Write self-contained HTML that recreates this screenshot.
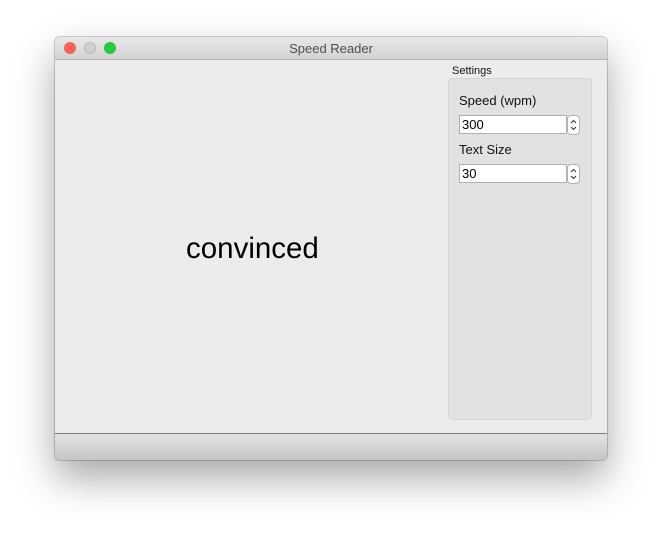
<!DOCTYPE html><html><head><style>
body{margin:0;width:662px;height:534px;background:#fff;font-family:"Liberation Sans",sans-serif;position:relative;overflow:hidden}
.win{position:absolute;left:55px;top:37px;width:552px;height:423px;border-radius:5px;background:#ececec;box-shadow:0 18px 40px rgba(0,0,0,.35),0 0 0 1px rgba(0,0,0,.18);overflow:hidden}
.tb{position:absolute;left:0;top:0;width:100%;height:22px;background:linear-gradient(#e8e8e8,#d3d3d3);border-bottom:1px solid #b4b4b4;text-align:center;font-size:13px;line-height:23px;color:#4d4d4d}
.d{position:absolute;top:5px;width:12px;height:12px;border-radius:50%}
.ft{position:absolute;left:0;top:396px;width:100%;height:27px;border-top:1px solid #7a7a7a;background:linear-gradient(#e3e3e3,#c4c4c4)}
.gb{position:absolute;left:393px;top:41px;width:142px;height:340px;background:#e2e2e2;border:1px solid #d6d6d6;border-radius:4px}
.lbl{position:absolute;font-size:13px;color:#111}
.in{position:absolute;width:104px;height:17px;background:#fff;border:1px solid #b0b0b0;font-size:13px;line-height:18px;padding-left:2px;box-sizing:content-box}
.sp{position:absolute;width:11px;height:18px;background:#fff;border:1px solid #b4b4b4;border-radius:4px}
</style></head><body>
<div class="win">
<div class="tb">Speed Reader
<div class="d" style="left:9px;background:#fe5f57;border:0"></div>
<div class="d" style="left:29px;background:#d0d0d0;box-shadow:inset 0 0 0 1px #bbb"></div>
<div class="d" style="left:49px;background:#28c840"></div></div>
<div style="position:absolute;left:131px;top:195px;font-size:29.5px;color:#000">convinced</div>
<div class="lbl" style="left:397px;top:28px;font-size:11px">Settings</div>
<div class="gb"></div>
<div class="lbl" style="left:404px;top:56px">Speed (wpm)</div>
<div class="in" style="left:404px;top:78px">300</div>
<div class="sp" style="left:512px;top:78px"><svg width="11" height="18"><path d="M3 7l2.5-2.5L8 7M3 11l2.5 2.5L8 11" fill="none" stroke="#333" stroke-width="1"/></svg></div>
<div class="lbl" style="left:404px;top:105px">Text Size</div>
<div class="in" style="left:404px;top:127px">30</div>
<div class="sp" style="left:512px;top:127px"><svg width="11" height="18"><path d="M3 7l2.5-2.5L8 7M3 11l2.5 2.5L8 11" fill="none" stroke="#333" stroke-width="1"/></svg></div>
<div class="ft"></div>
</div>
</body></html>
